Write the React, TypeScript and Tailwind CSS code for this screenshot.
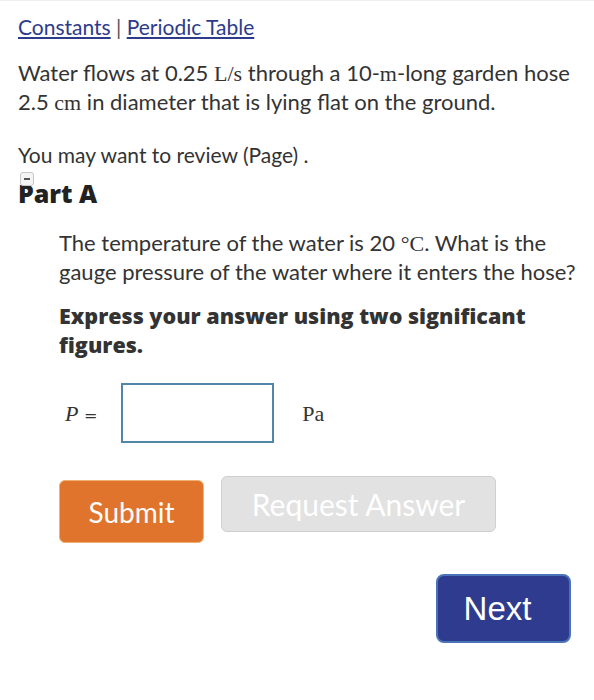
const sans = "font-['Lato','Open_Sans',sans-serif]"
const bold = "font-['Open_Sans','Lato',sans-serif] font-extrabold"

function MathText({ children }: { children: React.ReactNode }) {
  return <span className="font-['Liberation_Serif','DejaVu_Serif',serif] text-[22px]">{children}</span>
}

export default function App() {
  return (
    <div className={`min-h-[700px] w-[594px] bg-white border-t border-[#eeeeee] text-[#333333] ${sans}`}>
      <div className="px-[18px] pt-[12px]">
        {/* links */}
        <div className="text-[21px] leading-[28px]">
          <a href="#" className="text-[#2d3b8c] underline underline-offset-2">Constants</a>
          <span className="text-[#555555]"> | </span>
          <a href="#" className="text-[#2d3b8c] underline underline-offset-2">Periodic Table</a>
        </div>

        <p className="mt-[18px] text-[22px] leading-[28px]">
          Water flows at 0.25 <MathText>L/s</MathText> through a 10-<MathText>m</MathText>-long garden hose 2.5 <MathText>cm</MathText> in diameter that is lying flat on the ground.
        </p>

        <p className="mt-[24px] text-[21px] leading-[28px]">You may want to review (Page) .</p>

        {/* part header */}
        <div className="relative mt-[2px]">
          <div className="absolute left-[2px] top-[1px] flex h-[14px] w-[14px] items-center justify-center rounded-[3px] border border-[#c8c8c8] bg-[#f4f4f4]">
            <div className="h-[2px] w-[6px] bg-[#555555]" />
          </div>
          <h2 className={`pt-[8px] text-[25px] leading-[28px] text-[#222222] ${bold}`}>Part A</h2>
        </div>

        {/* question */}
        <div className="pl-[41px] pt-[22px]">
          <p className="text-[22px] leading-[28px]">
            The temperature of the water is 20 <MathText>°C</MathText>. What is the gauge pressure of the water where it enters the hose?
          </p>
          <p className={`mt-[15px] text-[21.5px] leading-[29px] text-[#333333] ${bold}`}>
            Express your answer using two significant figures.
          </p>

          <div className="mt-[24px] flex items-center">
            <span className="pl-[6px] font-['Liberation_Serif','DejaVu_Serif',serif] text-[22px]">
              <i>P</i> <span className="font-['DejaVu_Sans',sans-serif] text-[16px]">=</span>
            </span>
            <div className="ml-[24px] h-[60px] w-[153px] border-2 border-[#5286a6] bg-white" />
            <span className="ml-[28px] font-['Liberation_Serif','DejaVu_Serif',serif] text-[22px]">Pa</span>
          </div>

          <div className="mt-[33px] flex items-start gap-[17px]">
            <button className="mt-[4px] h-[63px] w-[145px] rounded-[6px] border border-[#f0b070] bg-[#e0742c] text-[28px] text-white">
              Submit
            </button>
            <button className="h-[56px] w-[275px] rounded-[6px] border border-[#cfcfcf] bg-[#e2e2e2] text-[30px] text-white">
              Request Answer
            </button>
          </div>
        </div>

        <div className="mt-[31px] flex justify-end pr-[5px]">
          <button className="h-[69px] w-[135px] rounded-[8px] border-2 border-[#4a73b8] bg-[#2e3b8e] pr-[12px] font-['Liberation_Sans',Arial,sans-serif] text-[33px] text-white">
            Next
          </button>
        </div>
      </div>
    </div>
  )
}
